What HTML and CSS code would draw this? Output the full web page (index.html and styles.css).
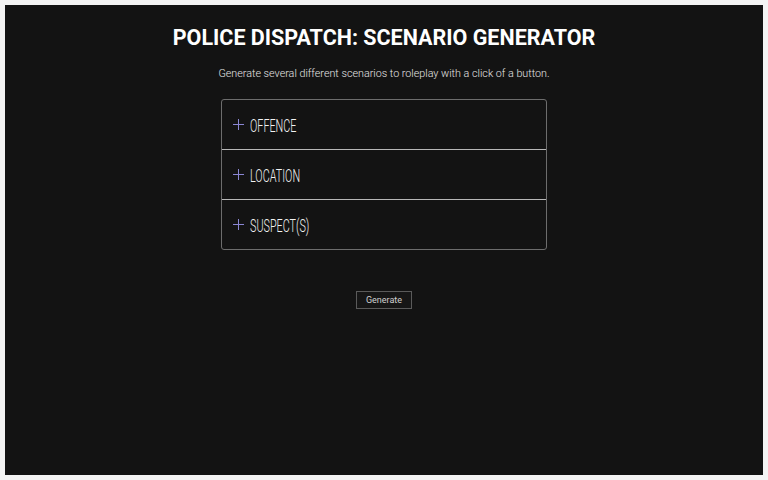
FILE: index.html
```html
<!DOCTYPE html>
<html lang="en">
<head>
    <meta charset="UTF-8">
    <meta name="viewport" content="width=device-width, initial-scale=1.0">
    <title>Police Dispatch: Scenario Generator</title>
    <link rel="stylesheet" href="styles.css">
</head>
<body>
    <div class="app">
        <h1 class="title">POLICE DISPATCH: SCENARIO GENERATOR</h1>
        <p class="intro">Generate several different scenarios to roleplay with a click of a button.</p>

        <div class="accordion">
            <div class="panel">
                <span class="plus"></span>
                <span class="label">OFFENCE</span>
            </div>
            <div class="panel">
                <span class="plus"></span>
                <span class="label">LOCATION</span>
            </div>
            <div class="panel">
                <span class="plus"></span>
                <span class="label">SUSPECT(S)</span>
            </div>
        </div>

        <button class="generate">Generate</button>
    </div>
</body>
</html>
```

FILE: styles.css
```css
body {
    margin: 0;
    padding: 5px;
    background-color: #f4f4f4;
    font-family: Roboto, Arial, sans-serif;
}

.app {
    height: 470px;
    background-color: #131313;
    color: #fff;
    display: flex;
    flex-direction: column;
    align-items: center;
    box-sizing: border-box;
    padding-top: 18px;
}

.title {
    margin: 0;
    font-size: 21.5px;
    font-weight: 700;
    line-height: 30px;
}

.intro {
    margin: 14px 0 0;
    font-size: 10.75px;
    font-weight: 300;
    color: #e6e6e6;
    line-height: 14px;
}

.accordion {
    box-sizing: border-box;
    width: 326px;
    margin-top: 18px;
    border: 1px solid #6d6d6d;
    border-radius: 3px;
}

.panel {
    height: 49px;
    display: flex;
    align-items: center;
    padding-left: 11px;
    border-top: 1px solid #b8b8b8;
}

.panel:first-child {
    border-top: none;
}

.plus {
    position: relative;
    width: 11px;
    height: 11px;
    margin-right: 6px;
}

.plus::before,
.plus::after {
    content: "";
    position: absolute;
    background-color: #8a86d4;
}

.plus::before {
    left: 0;
    right: 0;
    top: 5px;
    height: 1px;
}

.plus::after {
    top: 0;
    bottom: 0;
    left: 5px;
    width: 1px;
}

/* tall narrow labels */
.label {
    font-family: Roboto, Arial, sans-serif;
    font-weight: 300;
    font-size: 18px;
    color: #f2f2f2;
    transform: scaleX(0.6);
    transform-origin: left center;
    margin-top: 1px;
}

.generate {
    margin-top: 41px;
    width: 56px;
    height: 18px;
    padding: 0;
    font-family: Roboto, Arial, sans-serif;
    font-size: 9px;
    color: #d0d0d0;
    background-color: #161616;
    border: 1px solid #5a5a5a;
    border-radius: 0;
    cursor: pointer;
}
```
